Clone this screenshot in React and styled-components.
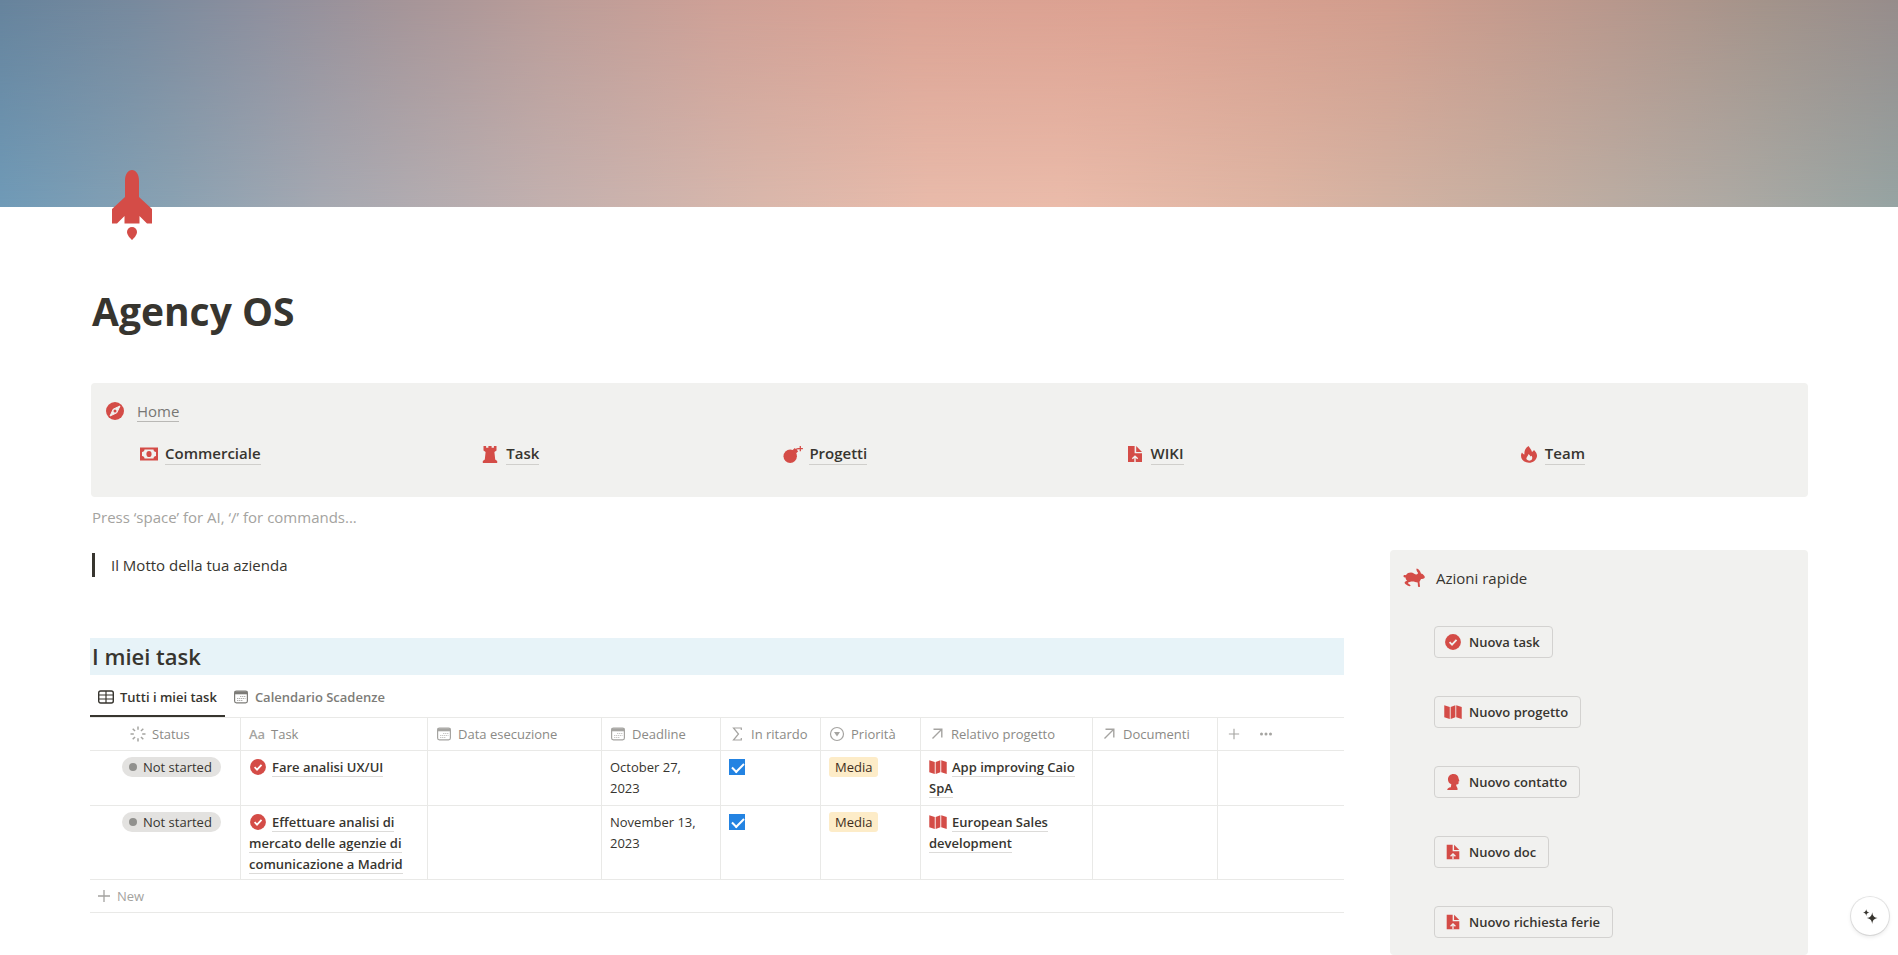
import React, { useState } from 'react';
import styled, { createGlobalStyle } from 'styled-components';

const RED = '#d44c47';
const INK = '#37352f';
const LINE = '#e9e9e7';

/* ---------- icons ---------- */

const Svg = ({ size = 20, box = '0 0 20 20', children, ...rest }) => (
  <svg width={size} height={size} viewBox={box} fill="none" aria-hidden="true" {...rest}>
    {children}
  </svg>
);

const RocketIcon = () => (
  <Svg size={78} box="0 0 78 78">
    <g fill={RED}>
      <path d="M32 15C32 8 35 4 39 4s7 4 7 11v16l13 12v14.500h-5L46.500 50v7.500h-15V50L24 57.500h-5V43l13-12z" />
      <path d="M34 66a5 5 0 0 1 10 0c0 3-3 6-5 8-2-2-5-5-5-8z" />
    </g>
  </Svg>
);

const CompassIcon = () => (
  <Svg>
    <circle cx="10" cy="10" r="9" fill={RED} />
    <path
      d="M15 5L11.800 11.800 5 15 8.200 8.200z"
      fill="var(--surface)"
      stroke="var(--surface)"
      strokeLinejoin="round"
    />
    <circle cx="10" cy="10" r="1.500" fill={RED} />
  </Svg>
);

const CashIcon = () => (
  <Svg>
    <path d="M1 3.500h18v13H1z" fill={RED} />
    <path
      d="M5.500 5.500h9c0 1.500 1 2.500 2.500 2.500v4c-1.500 0-2.500 1-2.500 2.500h-9C5.500 13 4.500 12 3 12V8c1.500 0 2.500-1 2.500-2.500z"
      fill="var(--surface)"
    />
    <ellipse cx="10" cy="10" rx="2.600" ry="3.100" fill={RED} />
  </Svg>
);

const RookIcon = () => (
  <Svg>
    <path
      d="M3.500 2h2.600v1.800h2.300V2h3.200v1.800h2.300V2h2.600v4.600L14.400 8l.8 7.500 2 1.500v2H2.800v-2l2-1.500L5.600 8 3.500 6.600z"
      fill={RED}
    />
  </Svg>
);

const BombIcon = () => (
  <Svg>
    <circle cx="7.200" cy="12.200" r="6.700" fill={RED} />
    <path d="M9.500 6.200l2.300-2.200 3.400 3.300-2.200 2.300z" fill={RED} />
    <path d="M12.500 6.500C13 5 14 4.600 15.500 4.600" stroke={RED} strokeWidth="1.200" />
    <path d="M17.300 2v5.200M14.700 4.600h5.200" stroke={RED} strokeWidth="1.300" />
  </Svg>
);

const DocIcon = () => (
  <Svg>
    <path d="M3 2h6.600v7.300H17V18H3z" fill={RED} />
    <path d="M11.200 2L17 7.900h-5.800z" fill={RED} />
    <path d="M10 18v-5.500M7.300 14.800L10 12.200l2.700 2.600" stroke="var(--surface)" strokeWidth="1.400" />
  </Svg>
);

const FlameIcon = () => (
  <Svg>
    <path
      d="M9.500 2c1 1.500 3 3.500 3.500 6 1-.5 1.500-1.200 2-2 2 2 3.200 4 3 6.200-.5 3.800-4 6.500-8 6.500-4.500 0-8-2.900-8-6.900 0-1.400.4-2.600 1-3.400.6 1 1.400 1.800 2.400 2C5.200 7 6.400 3.800 9.500 2z"
      fill={RED}
    />
    <path
      d="M9.600 10c.8 1 1.600 1.600 2 2.600l.8-.8c1 1 1.200 2.600.4 3.800-1 1.400-3.800 1.400-5 0-1.200-1.600.8-3 1.800-5.600z"
      fill="var(--surface)"
    />
  </Svg>
);

const RabbitIcon = () => (
  <Svg size={24} box="-1 -3 24 24">
    <path
      d="M.5 7.500C0 6.200 1.500 5.600 2.900 6.200c1-2 3-2.700 5.100-2.700S11.800 5.400 13.400 5.600c1-.3 1.800-1 1.600-1.800-1.200-1.400-2-3.200-1.400-4.400 2 .3 3.800 2.800 4.400 5 2.200.4 4 2.600 3.800 4C21.500 9.800 19 10 18 10c-.5 1.500-1.500 2.300-1.500 3l.5 4.400c-.2.8-1.900.8-2 .2l-.3-4c-1.800-.4-3.800-1.200-5.300-1.100-1.300 0-4.400.5-4.400 1.500.2 1.200 2.500 1.500 2.600 2.600-.2.800-1.600.6-2.600.2-1.500-.8-3.500-1.800-3.400-3.200.2-1.200 2.400-1.600 2.600-2.100-1.200-.5-1.600-2-1.600-3.100-1.100.2-1.800-.2-2.100-.9z"
      fill={RED}
    />
  </Svg>
);

const CheckIcon = ({ size = 18 }) => (
  <Svg size={size}>
    <circle cx="10" cy="10" r="8.800" fill={RED} />
    <path d="M6.200 10.200l2.700 2.700 5-5.300" stroke="var(--surface)" strokeWidth="2" />
  </Svg>
);

const MapIcon = ({ size = 18 }) => (
  <Svg size={size}>
    <path
      d="M.3 2.500L6.400 4.500V17.800L.3 15.800zM7.400 4.500L12.600 2.500V15.800L7.400 17.800zM13.600 2.500L19.700 4.500V17.800L13.600 15.800z"
      fill={RED}
    />
  </Svg>
);

const HeadIcon = () => (
  <Svg size={18}>
    <path
      d="M10.500 1.200c3.300 0 5.600 2.200 5.700 5l1 3h-1v2c0 1.300-.8 1.700-2.600 1.500v1.500l1.400 2.800v1.800H3.600c0-1.600 1.400-2.600 4-3l.5-3.200c-2.300-1-3.700-3-3.700-5.500 0-3.500 2.700-5.900 6.100-5.900z"
      fill={RED}
    />
  </Svg>
);

const TableIcon = () => (
  <Svg size={16} box="0 0 16 16" stroke="currentColor">
    <rect x="0.700" y="2" width="14.600" height="12" rx="2" strokeWidth="1.400" />
    <path d="M1 6h14M1 10h14M8 2v12" strokeWidth="1.200" />
  </Svg>
);

const CalendarIcon = () => (
  <Svg size={16} box="0 0 16 16">
    <rect x="1.600" y="2.100" width="12.800" height="11.800" rx="1.800" stroke="currentColor" strokeWidth="1.200" />
    <path d="M1.500 2.500h13v2.800h-13z" fill="currentColor" />
    <path
      d="M7 7.500h5.500M4 9.500h8.500M4 11.500h6"
      stroke="currentColor"
      strokeWidth="1.200"
      strokeDasharray="1.400 0.600"
      opacity="0.600"
    />
  </Svg>
);

const StatusIcon = () => (
  <Svg size={16} box="0 0 16 16">
    {[0, 45, 90, 135, 180, 225, 270, 315].map((angle) => (
      <path key={angle} d="M8 .5v3.300" stroke="currentColor" strokeWidth="1.500" transform={`rotate(${angle} 8 8)`} />
    ))}
  </Svg>
);

const SigmaIcon = () => (
  <Svg size={16} box="0 0 16 16">
    <path d="M12.300 4V2H4.500l5 6-5 6h7.800v-2" stroke="currentColor" strokeWidth="1.200" />
  </Svg>
);

const SelectIcon = () => (
  <Svg size={16} box="0 0 16 16">
    <circle cx="8" cy="8" r="6.500" stroke="currentColor" strokeWidth="1.200" />
    <path d="M5 6h6l-3 4.500z" fill="currentColor" />
  </Svg>
);

const RelationIcon = () => (
  <Svg size={16} box="0 0 16 16">
    <path d="M3.500 12.500l9-9M4.500 3.200h8.300v8.300" stroke="currentColor" strokeWidth="1.400" />
  </Svg>
);

const PlusIcon = ({ size = 14 }) => (
  <Svg size={size} box="0 0 14 14">
    <path d="M7 1v12M1 7h12" stroke="currentColor" strokeWidth="1.300" />
  </Svg>
);

const DotsIcon = () => (
  <Svg size={14} box="0 0 14 14">
    <g fill="currentColor">
      <circle cx="2.500" cy="7" r="1.500" />
      <circle cx="7" cy="7" r="1.500" />
      <circle cx="11.500" cy="7" r="1.500" />
    </g>
  </Svg>
);

const SparklesIcon = () => (
  <Svg>
    <g fill={INK}>
      <path d="M12.200 6.200c.5 3.700 1.800 5.200 5.500 5.800-3.700.6-5 2.200-5.500 5.900-.5-3.700-1.800-5.300-5.500-5.900 3.700-.6 5-2.100 5.500-5.800z" />
      <path d="M6.200 3.200c.3 2 1.100 3 3.200 3.400-2.100.4-2.900 1.400-3.200 3.400-.3-2-1.100-3-3.200-3.400 2.100-.4 2.900-1.400 3.200-3.400z" />
    </g>
  </Svg>
);

/* ---------- data ---------- */

const pages = [
  { name: 'Commerciale', icon: <CashIcon /> },
  { name: 'Task', icon: <RookIcon /> },
  { name: 'Progetti', icon: <BombIcon /> },
  { name: 'WIKI', icon: <DocIcon /> },
  { name: 'Team', icon: <FlameIcon /> },
];

const views = [
  { name: 'Tutti i miei task', icon: <TableIcon /> },
  { name: 'Calendario Scadenze', icon: <CalendarIcon /> },
];

const columns = [
  { name: 'Status', icon: <StatusIcon />, width: 151 },
  { name: 'Task', icon: 'Aa', width: 187 },
  { name: 'Data esecuzione', icon: <CalendarIcon />, width: 174 },
  { name: 'Deadline', icon: <CalendarIcon />, width: 119 },
  { name: 'In ritardo', icon: <SigmaIcon />, width: 100 },
  { name: 'Priorità', icon: <SelectIcon />, width: 100 },
  { name: 'Relativo progetto', icon: <RelationIcon />, width: 172 },
  { name: 'Documenti', icon: <RelationIcon />, width: 125 },
];

const tasks = [
  {
    status: 'Not started',
    title: 'Fare analisi UX/UI',
    deadline: 'October 27, 2023',
    late: true,
    priority: 'Media',
    project: 'App improving Caio SpA',
  },
  {
    status: 'Not started',
    title: 'Effettuare analisi di mercato delle agenzie di comunicazione a Madrid',
    deadline: 'November 13, 2023',
    late: true,
    priority: 'Media',
    project: 'European Sales development',
  },
];

const actions = [
  { name: 'Nuova task', icon: <CheckIcon /> },
  { name: 'Nuovo progetto', icon: <MapIcon /> },
  { name: 'Nuovo contatto', icon: <HeadIcon /> },
  { name: 'Nuovo doc', icon: <DocIcon /> },
  { name: 'Nuovo richiesta ferie', icon: <DocIcon /> },
];

/* ---------- page ---------- */

const TaskTable = () => (
  <Table>
    <colgroup>
      {columns.map(({ name, width }) => (
        <Col key={name} $width={width} />
      ))}
      <col />
    </colgroup>
    <thead>
      <tr>
        {columns.map(({ name, icon }) => (
          <HeadCell key={name}>
            <HeadLabel>
              <HeadIconBox>{icon}</HeadIconBox>
              {name}
            </HeadLabel>
          </HeadCell>
        ))}
        <HeadCell>
          <HeadTools>
            <ToolButton aria-label="Add property">
              <PlusIcon size={12} />
            </ToolButton>
            <ToolButton aria-label="More options">
              <DotsIcon />
            </ToolButton>
          </HeadTools>
        </HeadCell>
      </tr>
    </thead>
    <tbody>
      {tasks.map((task) => (
        <tr key={task.title}>
          <Cell>
            <StatusPill>
              <Dot />
              {task.status}
            </StatusPill>
          </Cell>
          <Cell>
            <InlineIcon>
              <CheckIcon />
            </InlineIcon>
            <CellLink href="#task">{task.title}</CellLink>
          </Cell>
          <Cell />
          <Cell>{task.deadline}</Cell>
          <Cell>
            <LateCheck aria-label={`In ritardo: ${task.title}`} defaultChecked={task.late} />
          </Cell>
          <Cell>
            <Tag>{task.priority}</Tag>
          </Cell>
          <Cell>
            <InlineIcon>
              <MapIcon />
            </InlineIcon>
            <CellLink href="#progetto">{task.project}</CellLink>
          </Cell>
          <Cell />
          <Cell />
        </tr>
      ))}
    </tbody>
  </Table>
);

const App = () => {
  const [view, setView] = useState(views[0].name);
  return (
    <>
      <GlobalStyle />
      <Cover />
      <Page>
        <PageIcon>
          <RocketIcon />
        </PageIcon>
        <Title>Agency OS</Title>

        <HomeCallout>
          <CalloutHead>
            <IconBox>
              <CompassIcon />
            </IconBox>
            <HomeLink href="#home">Home</HomeLink>
          </CalloutHead>
          <PageLinks>
            {pages.map(({ name, icon }) => (
              <PageLink key={name}>
                {icon}
                <PageAnchor href={`#${name.toLowerCase()}`}>{name}</PageAnchor>
              </PageLink>
            ))}
          </PageLinks>
        </HomeCallout>

        <BlockInput aria-label="New block" placeholder="Press ‘space’ for AI, ‘/’ for commands..." />

        <Columns>
          <main>
            <Quote>Il Motto della tua azienda</Quote>
            <Heading>I miei task</Heading>
            <Tabs>
              {views.map(({ name, icon }) => (
                <Tab key={name} $active={view === name} onClick={() => setView(name)}>
                  {icon}
                  {name}
                </Tab>
              ))}
            </Tabs>
            <TaskTable />
            <NewRow>
              <PlusIcon />
              New
            </NewRow>
          </main>

          <QuickCallout>
            <CalloutHead>
              <IconBox>
                <RabbitIcon />
              </IconBox>
              <QuickTitle>Azioni rapide</QuickTitle>
            </CalloutHead>
            <Actions>
              {actions.map(({ name, icon }) => (
                <ActionButton key={name}>
                  {icon}
                  {name}
                </ActionButton>
              ))}
            </Actions>
          </QuickCallout>
        </Columns>
      </Page>
      <AiButton aria-label="Ask AI">
        <SparklesIcon />
      </AiButton>
    </>
  );
};

export default App;

/* ---------- styles ---------- */

const GlobalStyle = createGlobalStyle`
  * {
    box-sizing: border-box;
  }
  body {
    --surface: #fff;
    margin: 0;
    background: #fff;
    color: ${INK};
    font-family: 'Open Sans', 'Segoe UI', sans-serif;
    font-size: 15px;
    line-height: 24px;
  }
  button, input {
    font: inherit;
    color: inherit;
  }
  button {
    background: none;
    border: 0;
    padding: 0;
    cursor: pointer;
  }
  svg {
    display: block;
    flex: none;
  }
`;

const Cover = styled.div`
  position: relative;
  height: 207px;
  background: linear-gradient(
    90deg,
    #709bb8 0%,
    #8aa2b3 9%,
    #a6a9b2 17%,
    #c4b1af 29%,
    #dab8ac 40%,
    #e9bbab 49%,
    #ebbcab 56%,
    #dfb6a4 67%,
    #c8b0a2 79%,
    #aeaaa4 91%,
    #96a4a3 100%
  );

  &::before {
    content: '';
    position: absolute;
    inset: 0;
    background: linear-gradient(
      90deg,
      #66839c 0%,
      #77899d 7%,
      #8e8f9d 14%,
      #a49498 21%,
      #ba9c98 29%,
      #cea096 38%,
      #daa293 48%,
      #dca191 60%,
      #d19d8d 73%,
      #b7978c 85%,
      #a3938a 93%,
      #968c8b 100%
    );
    mask-image: linear-gradient(#000, transparent);
  }
`;

const Page = styled.div`
  padding: 0 90px;
`;

const PageIcon = styled.div`
  position: relative;
  width: 78px;
  margin: -41px 0 0 3px;
`;

const Title = styled.h1`
  margin: 43px 0 48px;
  padding-left: 2px;
  font-size: 39px;
  line-height: 48px;
  font-weight: 700;
`;

const Callout = styled.section`
  --surface: #f1f1ef;
  background: #f1f1ef;
  border-radius: 4px;
`;

const HomeCallout = styled(Callout)`
  margin-left: 1px;
  padding: 16px 12px 32px;
`;

const CalloutHead = styled.div`
  display: flex;
  align-items: center;
  gap: 10px;
`;

const IconBox = styled.span`
  width: 24px;
  height: 24px;
  display: flex;
  align-items: center;
  justify-content: center;
`;

const HomeLink = styled.a`
  color: #787774;
  font-weight: 500;
  line-height: 20px;
  text-decoration: none;
  border-bottom: 1px solid #b9b8b5;
`;

const PageLinks = styled.nav`
  display: grid;
  grid-template-columns: 341fr 303fr 341fr 394fr 277fr;
  margin-top: 19px;
  padding-left: 36px;
`;

const PageLink = styled.div`
  display: flex;
  align-items: center;
  gap: 6px;
`;

const PageAnchor = styled.a`
  color: inherit;
  font-weight: 600;
  line-height: 22px;
  text-decoration: none;
  border-bottom: 1px solid #d0cfcc;
`;

const BlockInput = styled.input`
  display: block;
  width: 100%;
  height: 24px;
  margin: 8px 0 21px;
  padding: 0 2px;
  border: 0;
  outline: 0;
  background: none;

  &::placeholder {
    color: #a4a3a0;
    opacity: 1;
  }
`;

const Columns = styled.div`
  display: grid;
  grid-template-columns: minmax(0, 3fr) minmax(0, 1fr);
  gap: 46px;
  align-items: start;
`;

const Quote = styled.blockquote`
  margin: 3px 2px 61px;
  padding-left: 16px;
  border-left: 3px solid ${INK};
`;

const Heading = styled.h2`
  margin: 0;
  padding: 0 2px;
  background: #e7f3f8;
  font-size: 22px;
  line-height: 37px;
  font-weight: 600;
`;

const Tabs = styled.div`
  display: flex;
`;

const Tab = styled.button`
  display: flex;
  align-items: center;
  gap: 6px;
  height: 42px;
  padding: 4px 8px 0;
  color: ${({ $active }) => ($active ? INK : '#7d7c78')};
  font-size: 13px;
  font-weight: 600;
  border-bottom: 2px solid ${({ $active }) => ($active ? INK : 'transparent')};
`;

const Table = styled.table`
  width: 100%;
  table-layout: fixed;
  border-collapse: separate;
  border-spacing: 0;
  border-top: 1px solid ${LINE};
  font-size: 13px;
  line-height: 21px;
`;

const Col = styled.col`
  width: ${({ $width }) => $width}px;
`;

const HeadCell = styled.th`
  height: 33px;
  padding: 0 0 0 8px;
  border-bottom: 1px solid ${LINE};
  border-right: 1px solid ${LINE};
  color: #8b8a86;
  font-weight: 400;
  text-align: left;

  &:first-child {
    padding-left: 40px;
  }
  &:last-child {
    padding-left: 0;
    border-right: 0;
  }
`;

const HeadLabel = styled.div`
  display: flex;
  align-items: center;
  gap: 6px;
  white-space: nowrap;
`;

const HeadIconBox = styled.span`
  display: flex;
  justify-content: center;
  width: 16px;
  color: #a5a4a1;
  font-weight: 600;
`;

const HeadTools = styled.div`
  display: flex;
`;

const ToolButton = styled.button`
  display: flex;
  align-items: center;
  justify-content: center;
  width: 32px;
  height: 32px;
  color: #a5a4a1;
`;

const Cell = styled.td`
  height: 55px;
  padding: 6px 8px 4px;
  vertical-align: top;
  border-bottom: 1px solid ${LINE};
  border-right: 1px solid ${LINE};

  &:first-child {
    padding-left: 32px;
  }
  &:last-child {
    border-right: 0;
  }
`;

const StatusPill = styled.span`
  display: inline-flex;
  align-items: center;
  gap: 6px;
  height: 20px;
  padding: 0 9px 0 7px;
  border-radius: 10px;
  background: #e3e2e0;
  font-size: 13px;
  vertical-align: top;
`;

const Dot = styled.span`
  width: 8px;
  height: 8px;
  border-radius: 50%;
  background: #91918e;
`;

const Tag = styled.span`
  display: inline-flex;
  align-items: center;
  height: 20px;
  padding: 0 6px;
  border-radius: 3px;
  background: #fdecc8;
  color: #402c1b;
  vertical-align: top;
`;

const InlineIcon = styled.span`
  display: inline-block;
  height: 18px;
  margin-right: 5px;
  vertical-align: -4px;
  line-height: 18px;
`;

const CellLink = styled.a`
  color: inherit;
  font-weight: 600;
  text-decoration: none;
  border-bottom: 1px solid #dcdbd9;
`;

const LateCheck = styled.input.attrs({ type: 'checkbox' })`
  appearance: none;
  display: block;
  width: 16px;
  height: 16px;
  margin: 2px 0 0;
  background: #fff;
  border: 1px solid ${INK};

  &:checked {
    border-color: #2383e2;
    background: #2383e2;
  }
  &:checked::before {
    content: '';
    display: block;
    width: 10px;
    height: 5px;
    margin: 3px 0 0 2px;
    border: solid #fff;
    border-width: 0 0 2px 2px;
    transform: rotate(-45deg);
  }
`;

const NewRow = styled.button`
  display: flex;
  align-items: center;
  gap: 6px;
  width: 100%;
  height: 33px;
  padding: 0 7px;
  border-bottom: 1px solid ${LINE};
  color: #a4a3a0;
  font-size: 13px;
`;

const QuickCallout = styled(Callout)`
  padding: 16px 12px 17px;
`;

const QuickTitle = styled.span`
  font-weight: 500;
`;

const Actions = styled.div`
  display: flex;
  flex-direction: column;
  align-items: flex-start;
  gap: 38px;
  margin-top: 36px;
  padding-left: 32px;
`;

const ActionButton = styled.button`
  display: flex;
  align-items: center;
  gap: 7px;
  height: 32px;
  padding: 0 12px 0 9px;
  border: 1px solid #d3d2d0;
  border-radius: 4px;
  font-size: 13px;
  font-weight: 600;

  svg {
    width: 18px;
    height: 18px;
  }
`;

const AiButton = styled.button`
  position: fixed;
  right: 9px;
  bottom: 20px;
  display: flex;
  align-items: center;
  justify-content: center;
  width: 38px;
  height: 38px;
  border-radius: 50%;
  background: #fff;
  box-shadow: 0 0 0 1px rgba(15, 15, 15, 0.1), 0 2px 4px rgba(15, 15, 15, 0.1);
`;
